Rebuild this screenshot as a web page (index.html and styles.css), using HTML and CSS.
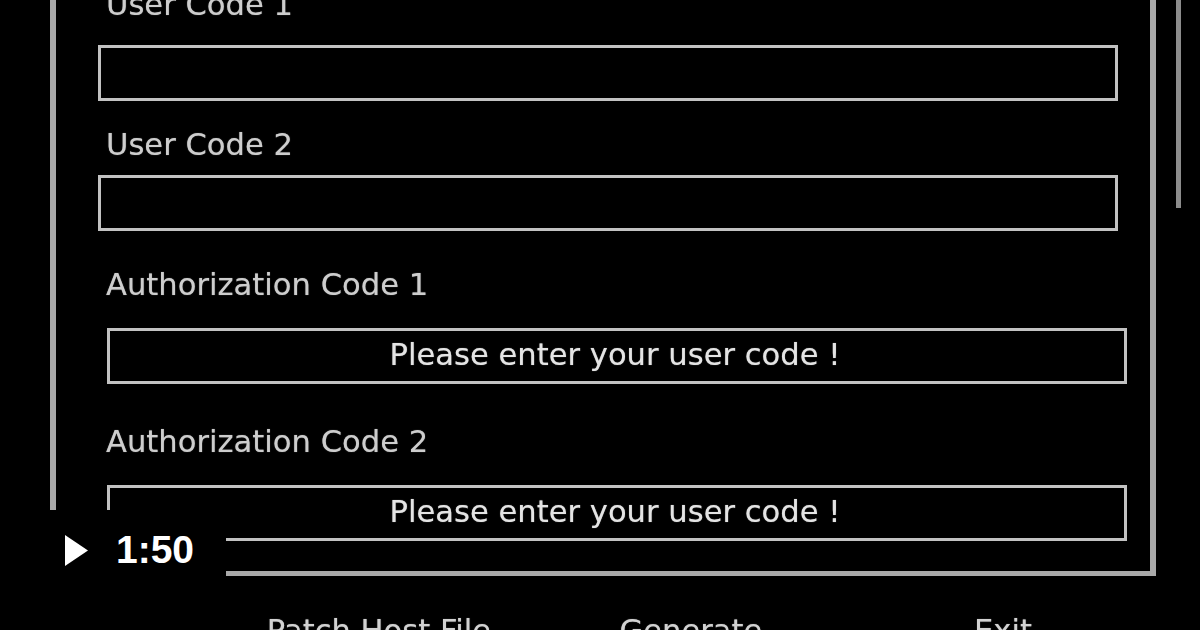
FILE: index.html
```html
<!DOCTYPE html>
<html lang="en">
<head>
<meta charset="utf-8">
<title>Keygen</title>
<link rel="stylesheet" href="styles.css">
</head>
<body>
<div class="screen">
  <div class="top-row">
    <div class="frame">
      <div class="field field-u1">
        <div class="label">User Code 1</div>
        <div class="box box-user"></div>
      </div>
      <div class="field field-u2">
        <div class="label">User Code 2</div>
        <div class="box box-user"></div>
      </div>
      <div class="field field-a1">
        <div class="label">Authorization Code 1</div>
        <div class="box box-auth">Please enter your user code !</div>
      </div>
      <div class="field field-a2">
        <div class="label">Authorization Code 2</div>
        <div class="box box-auth">Please enter your user code !</div>
      </div>
    </div>
    <div class="scroll-line"></div>
  </div>
  <div class="buttons">
    <div class="btn">Patch Host File</div>
    <div class="btn">Generate</div>
    <div class="btn">Exit</div>
  </div>
</div>
<div class="badge">
  <svg class="play" width="23" height="31" viewBox="0 0 23 31"><path d="M0 0 L23 15.5 L0 31 Z" fill="#fff"/></svg>
  <span class="time">1:50</span>
</div>
</body>
</html>
```

FILE: styles.css
```css
html, body {
  margin: 0;
  padding: 0;
  background: #000;
}
body {
  width: 1200px;
  height: 630px;
  overflow: hidden;
  position: relative;
  font-family: "DejaVu Sans", "Liberation Sans", sans-serif;
}
.screen {
  filter: blur(0.6px);
}
.top-row {
  display: flex;
  align-items: flex-start;
  margin-top: -13px;
}
.frame {
  margin-left: 50px;
  width: 1094px;
  border: 6px solid #a9a9a9;
  border-top: none;
  border-bottom-width: 5px;
  padding-bottom: 30px;
}
.scroll-line {
  margin-left: 20px;
  width: 5px;
  height: 221px;
  background: #8c8c8c;
}
.label {
  font-size: 30.6px;
  line-height: 36px;
  color: #cdcdcd;
  padding-left: 50px;
  white-space: nowrap;
  text-shadow: 0 0 1px rgba(220, 220, 220, 0.6);
}
.box {
  box-sizing: border-box;
  width: 1020px;
  height: 56px;
  border: 3px solid #c2c2c2;
  font-size: 30.6px;
  line-height: 48px;
  text-align: center;
  color: #e4e4e4;
  white-space: nowrap;
  text-shadow: 0 0 1px rgba(235, 235, 235, 0.6);
}
.box-user {
  margin-left: 42px;
}
.box-auth {
  margin-left: 51px;
  padding-right: 4px;
}
.field-u1 .box { margin-top: 22px; }
.field-u2 { margin-top: 26px; }
.field-u2 .box { margin-top: 12px; }
.field-a1 { margin-top: 36px; }
.field-a1 .box { margin-top: 25px; }
.field-a2 { margin-top: 40px; }
.field-a2 .box { margin-top: 25px; }

.buttons {
  display: flex;
  gap: 52px;
  padding-left: 249px;
  margin-top: 37px;
}
.btn {
  width: 260px;
  text-align: center;
  font-size: 30.6px;
  line-height: 36px;
  color: #d2d2d2;
  white-space: nowrap;
  text-shadow: 0 0 1px rgba(220, 220, 220, 0.6);
}
.badge {
  position: absolute;
  left: 40px;
  top: 510px;
  width: 186px;
  height: 80px;
  background: #000;
  display: flex;
  align-items: center;
  padding-left: 25px;
  box-sizing: border-box;
}
.play {
  display: block;
  flex: none;
}
.time {
  margin-left: 28px;
  font-family: "Liberation Sans", Arial, sans-serif;
  font-weight: bold;
  font-size: 39px;
  line-height: 40px;
  color: #fff;
}
```
